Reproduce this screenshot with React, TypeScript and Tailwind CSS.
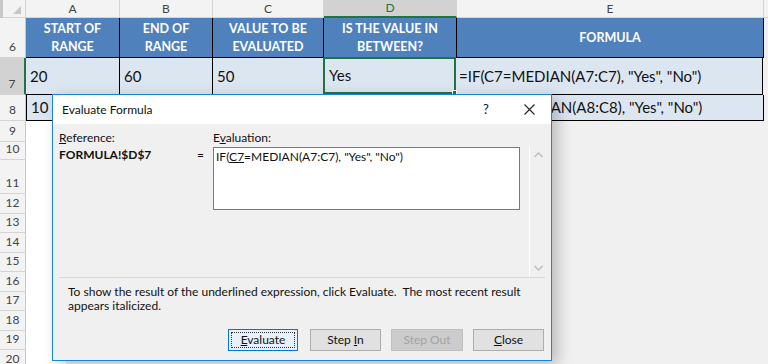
import React from "react";

const cellFont = { fontFamily: "Lato, 'Liberation Sans', sans-serif" };
const uiFont = { fontFamily: "Lato, 'Open Sans', sans-serif" };

function ColHead({ w, label, sel }: { w: string; label: string; sel?: boolean }) {
  return (
    <div
      className={`${w} h-full flex items-center justify-center border-r border-[#d4d4d4] text-[12px] text-[#444] ${
        sel ? "bg-[#d2d2d2] border-b-2 border-b-[#217346] text-[#217346]" : "border-b border-b-[#d4d4d4]"
      }`}
    >
      {label}
    </div>
  );
}

function RowHead({ h, n, sel }: { h: string; n: string; sel?: boolean }) {
  return (
    <div
      className={`${h} w-[26px] shrink-0 flex items-end justify-center pb-[1px] text-[12px] text-[#444] border-b border-[#d4d4d4] ${
        sel ? "bg-[#d2d2d2] border-r-2 border-r-[#217346]" : "bg-[#f3f3f3] border-r border-r-[#c8c8c8]"
      }`}
    >
      {n}
    </div>
  );
}

function Btn({ children, kind, extra }: { children: React.ReactNode; kind?: "primary" | "disabled"; extra?: string }) {
  if (kind === "primary")
    return (
      <div className={`w-[70px] h-[22px] border border-[#0078d7] bg-[#e5f1fb] p-[2px] ${extra ?? ""}`}>
        <div className="w-full h-full border border-dotted border-[#333] flex items-center justify-center text-[12px] text-[#111]">
          <span>{children}</span>
        </div>
      </div>
    );
  if (kind === "disabled")
    return (
      <div className="w-[72px] h-[22px] border border-[#bfbfbf] bg-[#cccccc] flex items-center justify-center text-[12px] text-[#a3a3a3]">
        <span>{children}</span>
      </div>
    );
  return (
    <div className="w-[71px] h-[22px] border border-[#adadad] bg-[#e1e1e1] flex items-center justify-center text-[12px] text-[#111]">
      <span>{children}</span>
    </div>
  );
}

export default function App() {
  const lowRows: [string, string][] = [
    ["h-[21px]", "9"],
    ["h-[18px]", "10"],
    ["h-[34px]", "11"],
    ["h-[20px]", "12"],
    ["h-[19px]", "13"],
    ["h-[20px]", "14"],
    ["h-[19px]", "15"],
    ["h-[20px]", "16"],
    ["h-[19px]", "17"],
    ["h-[20px]", "18"],
    ["h-[19px]", "19"],
    ["h-[20px]", "20"],
  ];
  return (
    <div className="relative w-[768px] h-[364px] overflow-hidden bg-[#f0f0f0]" style={cellFont}>
      {/* column headers */}
      <div className="flex h-[18px] bg-[#f3f3f3]">
        <div className="relative w-[26px] h-full border-r border-b border-[#d4d4d4] bg-[#f3f3f3]">
          <div className="absolute left-0 top-0 w-[3px] h-[18px] bg-[#c8c8c8]" />
          <svg className="absolute right-[4px] bottom-[3px]" width="8" height="8" viewBox="0 0 8 8">
            <polygon points="8,0 8,8 0,8" fill="#c6c6c6" />
          </svg>
        </div>
        <ColHead w="w-[94px]" label="A" />
        <ColHead w="w-[93px]" label="B" />
        <ColHead w="w-[111px]" label="C" />
        <ColHead w="w-[133px]" label="D" sel />
        <ColHead w="w-[307px]" label="E" />
        <div className="flex-1 h-full border-b border-[#d4d4d4]" />
      </div>

      {/* row 6 */}
      <div className="flex h-[40px]">
        <RowHead h="h-full" n="6" />
        <div className="flex h-full bg-[#4f81bd] border-b border-black text-white font-bold text-[12.5px] leading-[18px] text-center">
          <div className="w-[94px] flex items-center justify-center border-r border-black">START OF<br />RANGE</div>
          <div className="w-[93px] flex items-center justify-center border-r border-black">END OF<br />RANGE</div>
          <div className="w-[111px] flex items-center justify-center border-r border-black">VALUE TO BE<br />EVALUATED</div>
          <div className="w-[133px] flex items-center justify-center border-r border-black">IS THE VALUE IN<br />BETWEEN?</div>
          <div className="w-[307px] flex items-center justify-center border-r border-black">FORMULA</div>
        </div>
      </div>

      {/* row 7 */}
      <div className="flex h-[37px]">
        <RowHead h="h-full" n="7" sel />
        <div className="flex h-full bg-[#dce6f1] border-b border-black text-[15px] text-[#111]">
          <div className="w-[94px] flex items-center pl-[4px] border-r border-black">20</div>
          <div className="w-[93px] flex items-center pl-[4px] border-r border-black">60</div>
          <div className="w-[111px] flex items-center pl-[4px] border-r border-black">50</div>
          <div className="relative w-[133px] flex items-center pl-[4px] border-2 border-[#217346] -ml-[1px] -mt-[1px] h-[37px]">
            <span>Yes</span>
            <div className="absolute -right-[3px] -bottom-[3px] w-[5px] h-[5px] bg-[#217346] border border-white" />
          </div>
          <div className="w-[307px] flex items-center pl-[3px] border-r border-black">
            <span>=IF(C7=MEDIAN(A7:C7), "Yes", "No")</span>
          </div>
        </div>
      </div>

      {/* row 8 */}
      <div className="flex h-[26px]">
        <RowHead h="h-full" n="8" />
        <div className="flex h-full bg-[#dce6f1] border-b border-black text-[15px] text-[#111]">
          <div className="w-[94px] flex items-center pl-[4px] border-r border-l border-black">10</div>
          <div className="w-[93px] flex items-center pl-[4px] border-r border-black">60</div>
          <div className="w-[111px] flex items-center pl-[4px] border-r border-black">15</div>
          <div className="w-[133px] flex items-center pl-[4px] border-r border-black">No</div>
          <div className="w-[307px] flex items-center pl-[3px] border-r border-black">
            <span>=IF(C8=MEDIAN(A8:C8), "Yes", "No")</span>
          </div>
        </div>
      </div>

      {/* rows 9-20 */}
      {lowRows.map(([h, n]) => (
        <div key={n} className={`flex ${h}`}>
          <RowHead h="h-full" n={n} />
          <div className="w-[40px] h-full bg-white" />
          <div className="flex-1 h-full bg-[#f0f0f0]" />
        </div>
      ))}

      {/* dialog */}
      <div
        className="absolute left-[52px] top-[94px] w-[500px] h-[267px] border border-[#1883d7] bg-[#f0f0f0] flex flex-col shadow-[6px_4px_14px_rgba(0,0,0,0.22)]"
        style={uiFont}
      >
        <div className="h-[29px] bg-white flex items-center text-[12px] text-[#111] pl-[9px]">
          <span className="flex-1">Evaluate Formula</span>
          <span className="w-[44px] text-center text-[13px]">?</span>
          <svg className="mr-[16px] ml-[16px]" width="11" height="11" viewBox="0 0 11 11">
            <path d="M0.5 0.5 L10.5 10.5 M10.5 0.5 L0.5 10.5" stroke="#222" strokeWidth="1.1" />
          </svg>
        </div>
        <div className="flex-1 flex flex-col px-[6px]">
          <div className="flex pt-[6px] h-[153px]">
            <div className="w-[138px] text-[12px] text-[#111] leading-[16px]">
              <div>
                <span className="underline">R</span>eference:
              </div>
              <div className="font-bold mt-[1px]">FORMULA!$D$7</div>
            </div>
            <div className="w-[16px] pt-[17px] text-[12px] leading-[16px] text-[#111]">=</div>
            <div className="flex flex-col">
              <div className="text-[12px] leading-[16px] text-[#111]">
                E<span className="underline">v</span>aluation:
              </div>
              <div className="w-[307px] h-[63px] mt-[1px] bg-white border border-[#7a7a7a] px-[2px] py-[1px] text-[12px] leading-[16px] text-[#111]">
                IF(<span className="underline">C7</span>=MEDIAN(A7:C7), "Yes", "No")
              </div>
            </div>
            <div className="ml-[9px] mt-[17px] w-[16px] h-[130px] border-l border-white relative">
              <svg className="absolute left-[4px] top-[5px]" width="9" height="6" viewBox="0 0 9 6">
                <path d="M0.5 5 L4.5 1 L8.5 5" fill="none" stroke="#bdbdbd" strokeWidth="1.5" />
              </svg>
              <svg className="absolute left-[4px] bottom-[6px]" width="9" height="6" viewBox="0 0 9 6">
                <path d="M0.5 1 L4.5 5 L8.5 1" fill="none" stroke="#bdbdbd" strokeWidth="1.5" />
              </svg>
            </div>
          </div>
          <div className="border-t border-[#d7d7d7]" />
          <div className="pl-[9px] pt-[7px] text-[12px] leading-[14px] text-[#111] h-[51px]">
            To show the result of the underlined expression, click Evaluate.&nbsp; The most recent result
            <br />
            appears italicized.
          </div>
          <div className="flex justify-end gap-[10px] pr-[1px]">
            <Btn kind="primary" extra="mr-[2px]">
              <span className="underline">E</span>valuate
            </Btn>
            <Btn>
              Step <span className="underline">I</span>n
            </Btn>
            <Btn kind="disabled">Step Out</Btn>
            <Btn>
              <span className="underline">C</span>lose
            </Btn>
          </div>
        </div>
      </div>
    </div>
  );
}
